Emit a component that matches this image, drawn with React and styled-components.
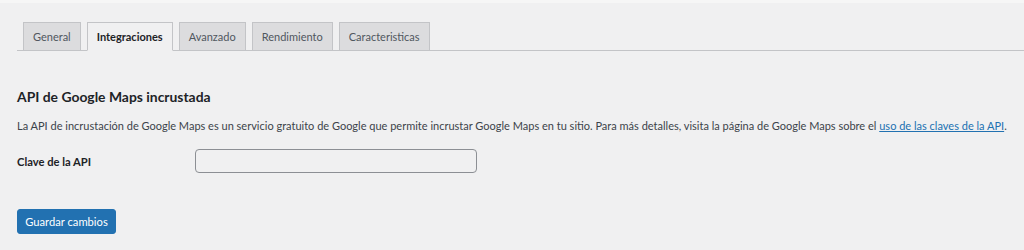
import React from 'react';
import styled, { createGlobalStyle } from 'styled-components';

const GlobalStyle = createGlobalStyle`
  body {
    margin: 0;
    background: #f0f0f1;
    font-family: Lato, "Liberation Sans", sans-serif;
    font-size: 11px;
    color: #3c434a;
  }
`;

const tabs = ['General', 'Integraciones', 'Avanzado', 'Rendimiento', 'Caracteristicas'];

const App = () => {
  return (
    <>
      <GlobalStyle />
      <TopStrip />
      <Wrap>
        <TabBar>
          {tabs.map((t) => (
            <Tab key={t} $active={t === 'Integraciones'}>{t}</Tab>
          ))}
        </TabBar>
        <Heading>API de Google Maps incrustada</Heading>
        <Description>
          La API de incrustación de Google Maps es un servicio gratuito de Google que permite incrustar Google Maps en tu sitio. Para más detalles, visita la página de Google Maps sobre el{' '}
          <Link href="#">uso de las claves de la API</Link>.
        </Description>
        <FieldRow>
          <FieldLabel htmlFor="api-key">Clave de la API</FieldLabel>
          <TextInput id="api-key" type="text" />
        </FieldRow>
        <SubmitButton type="button">Guardar cambios</SubmitButton>
      </Wrap>
    </>
  );
};

export default App;

const TopStrip = styled.div`
  height: 3px;
  background: #f6f6f6;
`;

const Wrap = styled.div`
  padding-left: 17px;
`;

const TabBar = styled.nav`
  display: flex;
  align-items: flex-end;
  gap: 6px;
  margin-top: 19px;
  padding-left: 6px;
  border-bottom: 1px solid #c3c4c7;
`;

const Tab = styled.span`
  display: block;
  box-sizing: border-box;
  height: 29px;
  margin-bottom: -1px;
  padding: 0 9px;
  line-height: 27px;
  font-size: 11px;
  font-weight: ${(p) => (p.$active ? 700 : 400)};
  white-space: nowrap;
  border: 1px solid #c3c4c7;
  border-bottom-color: ${(p) => (p.$active ? '#f0f0f1' : '#c3c4c7')};
  background: ${(p) => (p.$active ? '#f0f0f1' : '#dcdcde')};
  color: ${(p) => (p.$active ? '#1d2327' : '#50575e')};
`;

const Heading = styled.h2`
  margin: 35px 0 8px;
  font-size: 13.9px;
  line-height: 22px;
  font-weight: 700;
  color: #1d2327;
`;

const Description = styled.p`
  margin: 0;
  font-size: 11px;
  line-height: 20px;
  white-space: nowrap;
`;

const Link = styled.a`
  color: #2271b1;
  text-decoration: underline;
`;

const FieldRow = styled.div`
  display: flex;
  align-items: center;
  margin-top: 13px;
`;

const FieldLabel = styled.label`
  width: 178px;
  font-size: 11.2px;
  font-weight: 700;
  color: #1d2327;
`;

const TextInput = styled.input`
  box-sizing: border-box;
  width: 282px;
  height: 24px;
  margin: 0;
  padding: 0 8px;
  border: 1px solid #8c8f94;
  border-radius: 4px;
  background: #f0f0f1;
  font: inherit;
`;

const SubmitButton = styled.button`
  display: block;
  box-sizing: border-box;
  margin-top: 36px;
  width: 99px;
  height: 25px;
  padding: 0;
  border: 1px solid #2271b1;
  border-radius: 3px;
  background: #2271b1;
  color: #fff;
  font-family: inherit;
  font-size: 11.2px;
  white-space: nowrap;
  cursor: pointer;
`;
